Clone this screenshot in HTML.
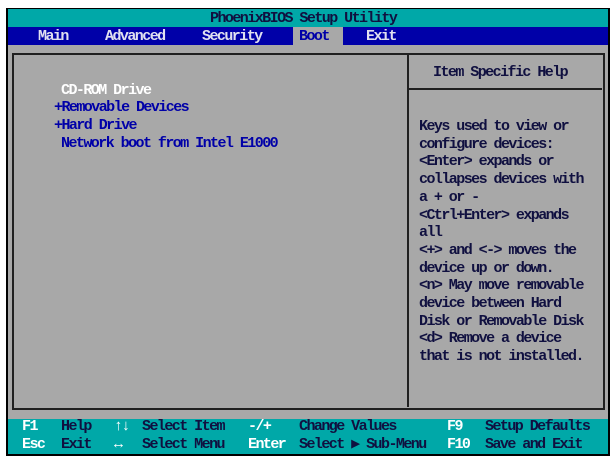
<!DOCTYPE html>
<html><head><meta charset="utf-8"><style>
*{margin:0;padding:0}
body{width:614px;height:462px;background:#fff;position:relative;overflow:hidden;font-family:"Liberation Mono","DejaVu Sans Mono",monospace;font-size:15px;font-weight:bold;letter-spacing:-1.55px}
div{position:absolute;white-space:pre;line-height:16px}
.bx{background:#000}
.w{color:#fff}.b{color:#0000a8}.k{color:#101040}
</style></head><body>
<div class="bx" style="left:6px;top:8px;width:604px;height:448px"></div>
<div style="left:8px;top:9px;width:600px;height:18px;background:#00a8a8"></div>
<div style="left:8px;top:27px;width:600px;height:18px;background:#0000a8"></div>
<div style="left:8px;top:45px;width:600px;height:374px;background:#a8a8a8"></div>
<div style="left:8px;top:419px;width:600px;height:35px;background:#00a8a8"></div>
<div style="left:293px;top:27px;width:50px;height:18px;background:#a8a8a8"></div>
<div class="k" style="left:210px;top:11px">PhoenixBIOS Setup Utility</div>
<div style="left:38px;top:29px;color:#e0e0f0">Main</div>
<div style="left:105px;top:29px;color:#e0e0f0">Advanced</div>
<div style="left:202px;top:29px;color:#e0e0f0">Security</div>
<div style="left:299px;top:29px;color:#0000a8">Boot</div>
<div style="left:366px;top:29px;color:#e0e0f0">Exit</div>
<div style="left:12px;top:53px;width:589px;height:353px;border:2px solid #202020"></div>
<div style="left:407px;top:54px;width:2px;height:353px;background:#202020"></div>
<div style="left:409px;top:88px;width:193px;height:2px;background:#202020"></div>
<div class="w" style="left:61px;top:83px">CD-ROM Drive</div>
<div class="b" style="left:54px;top:100px">+Removable Devices</div>
<div class="b" style="left:54px;top:118px">+Hard Drive</div>
<div class="b" style="left:61px;top:136px">Network boot from Intel E1000</div>
<div class="k" style="left:433px;top:65px">Item Specific Help</div>
<div class="k" style="left:419px;top:118px;line-height:17.7px">Keys used to view or
configure devices:
&lt;Enter&gt; expands or
collapses devices with
a + or -
&lt;Ctrl+Enter&gt; expands
all
&lt;+&gt; and &lt;-&gt; moves the
device up or down.
&lt;n&gt; May move removable
device between Hard
Disk or Removable Disk
&lt;d&gt; Remove a device
that is not installed.</div>
<div class="w" style="left:22px;top:419px">F1</div>
<div class="k" style="left:61px;top:419px">Help</div>
<div class="w" style="left:114px;top:419px">↑↓</div>
<div class="k" style="left:142px;top:419px">Select Item</div>
<div class="w" style="left:248px;top:419px">-/+</div>
<div class="k" style="left:299px;top:419px">Change Values</div>
<div class="w" style="left:447px;top:419px">F9</div>
<div class="k" style="left:485px;top:419px">Setup Defaults</div>
<div class="w" style="left:22px;top:437px">Esc</div>
<div class="k" style="left:61px;top:437px">Exit</div>
<div class="w" style="left:114px;top:437px">↔</div>
<div class="k" style="left:142px;top:437px">Select Menu</div>
<div class="w" style="left:248px;top:437px">Enter</div>
<div class="k" style="left:299px;top:437px">Select ▶ Sub-Menu</div>
<div class="w" style="left:447px;top:437px">F10</div>
<div class="k" style="left:485px;top:437px">Save and Exit</div>
</body></html>
